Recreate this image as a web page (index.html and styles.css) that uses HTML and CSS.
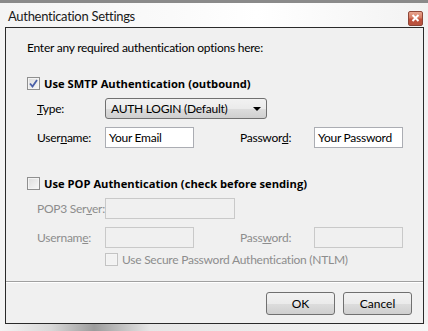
FILE: index.html
```html
<!DOCTYPE html>
<html lang="en">
<head>
    <meta charset="UTF-8">
    <title>Authentication Settings</title>
    <link rel="stylesheet" href="styles.css">
</head>
<body>

    <div class="window">

        <div class="titlebar">
            <span class="title">Authentication Settings</span>
            <span class="close-btn">
                <svg width="9" height="8" viewBox="0 0 9 8">
                    <path d="M1.5 1 L7.5 7 M7.5 1 L1.5 7" stroke="#fff" stroke-width="2"/>
                </svg>
            </span>
        </div>

        <div class="panel">

            <p class="intro">Enter any required authentication options here:</p>

            <label class="check-row bold smtp">
                <span class="checkbox">
                    <svg width="9" height="9" viewBox="0 0 9 9">
                        <path d="M1 4.5 L3.5 7.5 L8 1" stroke="#4a5fa8" stroke-width="1.8" fill="none"/>
                    </svg>
                </span>
                Use SMTP Authentication (outbound)
            </label>

            <div class="row type-row">
                <span class="field-label"><u>T</u>ype:</span>
                <div class="select">
                    <span>AUTH LOGIN (Default)</span>
                    <span class="arrow"></span>
                </div>
            </div>

            <div class="row user-row">
                <span class="field-label">User<u>n</u>ame:</span>
                <div class="input">Your Email</div>
                <span class="field-label pass-label">Passwor<u>d</u>:</span>
                <div class="input">Your Password</div>
            </div>

            <label class="check-row bold pop">
                <span class="checkbox"></span>
                Use POP Authentication (check before sending)
            </label>

            <div class="row server-row disabled">
                <span class="field-label">POP3 Ser<u>v</u>er:</span>
                <div class="input long"></div>
            </div>

            <div class="row user-row disabled">
                <span class="field-label">Usernam<u>e</u>:</span>
                <div class="input"></div>
                <span class="field-label pass-label">Pass<u>w</u>ord:</span>
                <div class="input"></div>
            </div>

            <label class="check-row ntlm disabled">
                <span class="checkbox"></span>
                Use Secure Password Authentication (NTLM)
            </label>

            <div class="separator"></div>

            <div class="buttons">
                <button class="btn">OK</button>
                <button class="btn">Cancel</button>
            </div>

        </div>

        <div class="frame-bottom"></div>

    </div>

</body>
</html>
```

FILE: styles.css
```css
body {
    margin: 0;
    font-family: Lato, "Open Sans", sans-serif;
    font-size: 12px;
    letter-spacing: -0.25px;
    color: #000;
    background: #fff;
}
.window {
    width: 428px;
    height: 331px;
    background: linear-gradient(90deg, #f4f4f4 0%, #fafafa 40%, #ffffff 60%, #f2f2f2 100%);
    border-top: 3px solid #8a8a8a;
    box-sizing: border-box;
    overflow: hidden;
}
.titlebar {
    height: 24px;
    display: flex;
    align-items: center;
    justify-content: space-between;
    padding: 0 5px 0 8px;
}
.title {
    font-size: 13px;
    letter-spacing: -0.3px;
    color: #1a1a1a;
    padding-top: 2px;
}
.close-btn {
    width: 15px;
    height: 15px;
    margin-top: 6px;
    border-radius: 2px;
    background: linear-gradient(#e8a58f 0%, #d57a61 45%, #c14f3a 55%, #b8533f 100%);
    border: 1px solid #8e4638;
    box-sizing: border-box;
    display: flex;
    align-items: center;
    justify-content: center;
}
.panel {
    margin: 0 4px 0 5px;
    height: 297px;
    box-sizing: border-box;
    border: 1px solid #2a2a2a;
    background: #f0f0f0;
    display: flex;
    flex-direction: column;
}
.intro {
    margin: 12px 0 0 21px;
    line-height: 16px;
}
.check-row {
    display: flex;
    align-items: center;
    gap: 4px;
    height: 16px;
    margin-left: 21px;
}
.bold {
    font-family: "Open Sans", sans-serif;
    font-weight: bold;
    font-size: 11.2px;
    letter-spacing: 0;
}
.smtp {
    margin-top: 19px;
}
.pop {
    margin-top: 27px;
}
.checkbox {
    flex-shrink: 0;
    width: 13px;
    height: 13px;
    box-sizing: border-box;
    border: 1px solid #8f8f8f;
    background: linear-gradient(135deg, #dcdcdc, #f8f8f8);
    box-shadow: inset 0 0 0 1px #f4f4f4;
    display: flex;
    align-items: center;
    justify-content: center;
}
.row {
    display: flex;
    align-items: center;
    margin-left: 31px;
    height: 21px;
}
.type-row {
    margin-top: 7px;
}
.user-row {
    margin-top: 8px;
}
.server-row {
    margin-top: 7px;
}
.field-label {
    flex-shrink: 0;
    width: 68px;
    white-space: nowrap;
}
.pass-label {
    width: 74px;
    margin-left: 46px;
}
.select {
    width: 162px;
    height: 21px;
    box-sizing: border-box;
    border: 1px solid #707070;
    border-radius: 3px;
    background: linear-gradient(#f2f2f2 0%, #ebebeb 50%, #dddddd 51%, #cfcfcf 100%);
    display: flex;
    align-items: center;
    justify-content: space-between;
    padding: 0 5px;
}
.arrow {
    width: 0;
    height: 0;
    border-left: 4px solid transparent;
    border-right: 4px solid transparent;
    border-top: 4px solid #000;
}
.input {
    flex-shrink: 0;
    width: 89px;
    height: 21px;
    box-sizing: border-box;
    border: 1px solid #abadb3;
    background: #fff;
    padding: 0 3px;
    line-height: 19px;
    white-space: nowrap;
}
.input.long {
    width: 130px;
}
.disabled {
    color: #8d8d8d;
}
.disabled .input {
    background: #f0f0f0;
    border-color: #c9c9c9;
}
.disabled .checkbox {
    border-color: #c3c3c3;
    background: #f2f2f2;
}
.ntlm {
    margin: 3px 0 0 99px;
}
.separator {
    margin-top: 14px;
    height: 1px;
    background: #a0a0a0;
    border-bottom: 1px solid #fff;
}
.buttons {
    display: flex;
    justify-content: flex-end;
    gap: 8px;
    padding: 9px 11px 0 0;
}
.btn {
    width: 69px;
    height: 23px;
    border: 1px solid #707070;
    border-radius: 3px;
    background: linear-gradient(#f2f2f2 0%, #ebebeb 50%, #dddddd 51%, #cfcfcf 100%);
    font-family: Lato, "Open Sans", sans-serif;
    font-size: 12px;
    color: #000;
    padding: 0;
}
.frame-bottom {
    height: 7px;
    background: linear-gradient(90deg, #f4f4f4 0%, #d8d8d8 12%, #9c9c9c 22%, #e6e6e6 35%, #f6f6f6 100%);
}
```
